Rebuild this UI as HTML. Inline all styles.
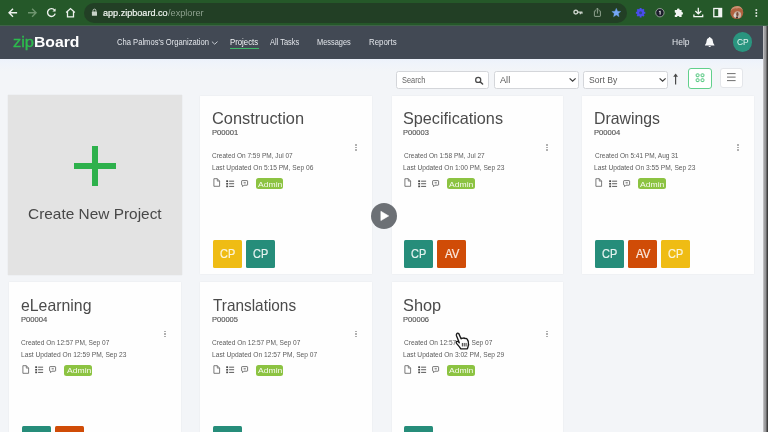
<!DOCTYPE html>
<html>
<head>
<meta charset="utf-8">
<title>zipBoard</title>
<style>
*{box-sizing:border-box;margin:0;padding:0}
html,body{width:768px;height:432px;overflow:hidden;background:#f3f5f8;font-family:"Liberation Sans",sans-serif;}
#root{position:relative;width:768px;height:432px;overflow:hidden;background:#f3f5f8}
.abs{position:absolute}
.t{position:absolute;white-space:nowrap;transform-origin:0 0}
#txt{position:absolute;left:0;top:0;width:768px;height:432px;will-change:transform;opacity:0.999}
#chrome{position:absolute;left:0;top:0;width:768px;height:26px;background:#255829;border-bottom:1px solid #3e6347}
#omni{position:absolute;left:83.8px;top:2.5px;width:542.8px;height:20.5px;border-radius:10.25px;background:#223f25}
#nav{position:absolute;left:0;top:26px;width:764px;height:33px;background:#424954}
.card{position:absolute;background:#fefefe;width:172.4px;height:178.8px;box-shadow:0 0 1.5px rgba(0,0,0,0.07)}
.dots{position:absolute;width:2px;height:8px}
.dots i{display:block;width:2.1px;height:1.7px;border-radius:0.8px;background:#a2a2a2;margin-bottom:0.8px}
.badge{position:absolute;width:27.8px;height:11.1px;border-radius:2.5px;background:#8cc342}
.av{position:absolute;width:29.1px;height:28.7px;border-radius:1.5px}
.teal{background:#268d7a}.yel{background:#efbc14}.org{background:#d04c07}
.box{position:absolute;background:#fff;border:1px solid #d4d6da;border-radius:2.5px}
</style>
</head>
<body>
<div id="root">

<div id="chrome"><div id="omni"></div></div>
<div id="nav"></div>
<div class="abs" style="left:0;top:59px;width:764px;height:12px;background:linear-gradient(#edf2fb,#f0f4fa 45%,#f3f5f8)"></div>
<!-- right scrollbar strip -->
<div class="abs" style="left:763.4px;top:26px;width:4.6px;height:406px;background:linear-gradient(to right,#d4d4d6 0,#a6a6a8 20%,#8e8e90 66%,#444 74%,#3a3a3a 100%)"></div>
<!-- create card -->
<div class="abs" style="left:8.3px;top:95.2px;width:173.3px;height:179.8px;background:#e3e3e3;box-shadow:0 0 1px rgba(0,0,0,0.12)"></div>
<div class="abs" style="left:74px;top:162.8px;width:42px;height:6.5px;background:#2eb14c"></div>
<div class="abs" style="left:91.8px;top:145.8px;width:6.5px;height:40.5px;background:#2eb14c"></div>
<!-- toolbar boxes -->
<div class="box" style="left:395.5px;top:71px;width:93.1px;height:17.6px"></div>
<div class="box" style="left:494.3px;top:71px;width:84.3px;height:17.6px"></div>
<div class="box" style="left:583.4px;top:71px;width:84.2px;height:17.6px"></div>
<div class="box" style="left:688.3px;top:68.4px;width:23.7px;height:20.8px;border-color:#62d08c;border-radius:3px"></div>
<div class="box" style="left:720.1px;top:68.4px;width:22.6px;height:19.6px;border-color:#e4e6ea;border-radius:3px"></div>
<!-- browser left icons -->
<svg class="abs" style="left:0;top:0" width="110" height="25" viewBox="0 0 110 25">
 <g fill="none" stroke="#eef2ee" stroke-width="1.35" stroke-linecap="butt" stroke-linejoin="miter">
  <path d="M17.1 12.7 H9.2 M13 8.7 L9 12.7 L13 16.7"/>
  <path d="M28 12.7 H35.9 M32.1 8.7 L36.1 12.7 L32.1 16.7" stroke="#6f956f"/>
  <path d="M54.6 10.2 A3.9 3.9 0 1 0 55.2 13.6" stroke-width="1.4"/>
  <path d="M66.2 12.6 L70.5 8.6 L74.8 12.6 M67.5 11.8 V16.8 H73.5 V11.8" stroke-width="1.3"/>
 </g>
 <path d="M55.6 8.4 V11.6 H52.4 Z" fill="#eef2ee"/>
 <rect x="91.9" y="11.6" width="5.1" height="4.2" rx="0.6" fill="#c9d3c9"/>
 <path d="M93 11.8 V10.6 A1.45 1.45 0 0 1 95.9 10.6 V11.8" fill="none" stroke="#c9d3c9" stroke-width="0.9"/>
</svg>
<!-- browser right icons -->
<svg class="abs" style="left:560px;top:0" width="208" height="26" viewBox="0 0 208 26">
 <!-- key -->
 <g fill="none" stroke="#cbd3cb" stroke-width="1.35">
  <circle cx="15.8" cy="12.1" r="1.85"/>
  <path d="M17.6 12.1 H22.4 M20.3 12.1 V14.2 M21.9 12.1 V13.8"/>
 </g>
 <!-- share -->
 <g fill="none" stroke="#93a693" stroke-width="0.95" stroke-linejoin="round">
  <path d="M36.1 10.8 H34.9 Q34.4 10.8 34.4 11.3 V15.9 Q34.4 16.4 34.9 16.4 H39.9 Q40.4 16.4 40.4 15.9 V11.3 Q40.4 10.8 39.9 10.8 H38.7"/>
  <path d="M37.4 13.6 V8.3 M36 9.6 L37.4 8.2 L38.8 9.6"/>
 </g>
 <!-- star -->
 <path d="M56.3 8.2 L57.6 11.2 L60.8 11.5 L58.4 13.6 L59.1 16.8 L56.3 15.1 L53.5 16.8 L54.2 13.6 L51.8 11.5 L55 11.2 Z" fill="#74a7f7" stroke="#74a7f7" stroke-width="0.3" stroke-linejoin="round"/>
 <!-- blue gear -->
 <circle cx="80.6" cy="12.7" r="3.6" fill="#4a4cec"/>
 <g stroke="#4a4cec" stroke-width="1.9" stroke-linecap="butt">
  <path d="M80.6 8 V17.4 M75.9 12.7 H85.3 M77.3 9.4 L83.9 16 M83.9 9.4 L77.3 16"/>
 </g>
 <circle cx="80.6" cy="12.7" r="1.5" fill="#2c4a86"/>
 <!-- circle 1 -->
 <circle cx="99.9" cy="12.7" r="4.2" fill="#1b1d2a" stroke="#aeb6ae" stroke-width="0.8"/>
 <rect x="99.6" y="10.8" width="1" height="3.8" fill="#e9ece9"/><rect x="98.9" y="11.1" width="1" height="0.8" fill="#e9ece9"/>
 <!-- puzzle -->
 <path d="M114.8 10 H116.9 A1.4 1.4 0 1 1 119.7 10 H121.6 V12 A1.4 1.4 0 1 1 121.6 14.8 V17.1 H119.4 A1.2 1.2 0 1 0 117 17.1 H114.8 V14.9 A1.2 1.2 0 1 0 114.8 12.5 Z" fill="#f3f6f3"/>
 <!-- download -->
 <g fill="none" stroke="#f3f6f3" stroke-width="1.3">
  <path d="M138.3 7.8 V13.6 M135.4 11 L138.3 13.9 L141.2 11"/>
  <path d="M133.9 14.4 V16.6 H142.7 V14.4" stroke-width="1.3"/>
 </g>
 <!-- panel -->
 <rect x="153.8" y="8.5" width="7.8" height="8.2" fill="none" stroke="#f3f6f3" stroke-width="1.3"/>
 <rect x="158.2" y="8.5" width="3.4" height="8.2" fill="#f3f6f3"/>
 <!-- profile -->
 <circle cx="176.8" cy="12.6" r="6.5" fill="#b0623f"/>
 <path d="M170.6 11 A6.5 6.5 0 0 1 183 10.4 Q180 7 176.8 8.6 Q173.5 7.4 170.6 11 Z" fill="#c89274"/>
 <ellipse cx="177.6" cy="14.8" rx="3.6" ry="3.5" fill="#c9b3a6"/>
 <ellipse cx="175" cy="15.4" rx="1.5" ry="2" fill="#d8cdc8"/>
 <ellipse cx="177.4" cy="14.2" rx="1.1" ry="2.2" fill="#7a4a38"/>
 <ellipse cx="177" cy="17.6" rx="1" ry="1" fill="#3c2c2c"/>
 <!-- dots -->
 <g fill="#dfe5df"><circle cx="196.3" cy="9.9" r="1"/><circle cx="196.3" cy="13" r="1"/><circle cx="196.3" cy="16.1" r="1"/></g>
</svg>
<!-- nav: chevron, underline, bell, avatar -->
<svg class="abs" style="left:210px;top:38px" width="10" height="9" viewBox="0 0 10 9"><path d="M1.9 3.6 L4.7 6.2 L7.5 3.6" fill="none" stroke="#d3d7dd" stroke-width="0.9"/></svg>
<div class="abs" style="left:229.6px;top:47.6px;width:29.4px;height:1.4px;background:#3db868"></div>
<svg class="abs" style="left:703px;top:35px" width="14" height="14" viewBox="0 0 14 14"><path d="M6.7 1.9 Q7.5 1.9 7.5 2.7 Q9.9 3.4 9.9 6.2 Q9.9 8.8 11.4 9.9 V10.4 H2 V9.9 Q3.5 8.8 3.5 6.2 Q3.5 3.4 5.9 2.7 Q5.9 1.9 6.7 1.9 Z M5.5 10.9 H7.9 Q7.9 11.9 6.7 11.9 Q5.5 11.9 5.5 10.9 Z" fill="#f7f8f9"/></svg>
<div class="abs" style="left:732.5px;top:32.4px;width:19.6px;height:19.6px;border-radius:10px;background:#2a957f"></div>
<!-- toolbar icons -->
<svg class="abs" style="left:473px;top:75px" width="12" height="11" viewBox="0 0 12 11"><circle cx="5.2" cy="4.9" r="2.55" fill="none" stroke="#4a4a4a" stroke-width="1.25"/><path d="M7.2 6.9 L9.6 9.0" stroke="#4a4a4a" stroke-width="1.5" stroke-linecap="round"/></svg>
<svg class="abs" style="left:568px;top:76px" width="10" height="8" viewBox="0 0 10 8"><path d="M1.6 2.4 L4.6 5.2 L7.6 2.4" fill="none" stroke="#3c3c3c" stroke-width="1.25"/></svg>
<svg class="abs" style="left:657.6px;top:76px" width="10" height="8" viewBox="0 0 10 8"><path d="M1.6 2.4 L4.6 5.2 L7.6 2.4" fill="none" stroke="#3c3c3c" stroke-width="1.25"/></svg>
<svg class="abs" style="left:671px;top:72px" width="10" height="14" viewBox="0 0 10 14"><path d="M4.6 12.6 V2.6" stroke="#4a4a4a" stroke-width="1.2"/><path d="M2.2 4.8 L4.6 1.6 L7 4.8 Z" fill="#4a4a4a"/></svg>
<svg class="abs" style="left:694px;top:72px" width="12" height="12" viewBox="0 0 12 12"><g fill="none" stroke="#4cc57a" stroke-width="1.0"><rect x="2.2" y="1.9" width="2.8" height="2.8" rx="0.7"/><rect x="7.1" y="1.9" width="2.8" height="2.8" rx="0.7"/><rect x="2.2" y="6.8" width="2.8" height="2.8" rx="0.7"/><rect x="7.1" y="6.8" width="2.8" height="2.8" rx="0.7"/></g></svg>
<svg class="abs" style="left:726px;top:72px" width="11" height="11" viewBox="0 0 11 11"><g fill="#707070"><rect x="1" y="1.1" width="8.6" height="1"/><rect x="1" y="4.6" width="8.6" height="1"/><rect x="1" y="8.1" width="8.6" height="1"/></g></svg>

<div class="card" style="left:200.2px;top:95.7px;width:172.2px"></div>
<div class="badge" style="left:255.6px;top:178.2px"></div>
<div class="dots" style="left:354.9px;top:144.2px"><i></i><i></i><i></i></div>
<svg class="abs" style="left:212.7px;top:178.0px" width="8" height="9" viewBox="0 0 8 9"><path d="M0.9 0.7 H4.3 L6.6 3.1 V8.3 H0.9 Z" fill="#fff" stroke="#5a5a5a" stroke-width="0.8" stroke-linejoin="round"/><path d="M4.3 0.7 V3.1 H6.6" fill="none" stroke="#5a5a5a" stroke-width="0.7"/></svg>
<svg class="abs" style="left:226.39999999999998px;top:179.7px" width="9" height="8" viewBox="0 0 9 8"><g fill="#4a4a4a"><rect x="0.2" y="0.3" width="1.9" height="1.7"/><rect x="0.2" y="2.9" width="1.9" height="1.7"/><rect x="0.2" y="5.5" width="1.9" height="1.7"/><rect x="3.1" y="0.7" width="5" height="0.9"/><rect x="3.1" y="3.3" width="5" height="0.9"/><rect x="3.1" y="5.9" width="5" height="0.9"/></g></svg>
<svg class="abs" style="left:240.6px;top:179.5px" width="8" height="8" viewBox="0 0 8 8"><path d="M1.2 0.6 H6.0 Q6.6 0.6 6.6 1.2 V4.6 Q6.6 5.2 6.0 5.2 H3 L1.6 6.6 V5.2 H1.2 Q0.6 5.2 0.6 4.6 V1.2 Q0.6 0.6 1.2 0.6 Z" fill="#fff" stroke="#555" stroke-width="0.8" stroke-linejoin="round"/><rect x="2.6" y="2.4" width="2.2" height="0.9" fill="#555"/></svg>
<div class="av yel" style="left:212.79999999999998px;top:239.7px"></div>
<div class="av teal" style="left:246.0px;top:239.7px"></div>
<div class="card" style="left:391.8px;top:95.7px;width:171.6px"></div>
<div class="badge" style="left:446.79999999999995px;top:178.2px"></div>
<div class="dots" style="left:546.0999999999999px;top:144.2px"><i></i><i></i><i></i></div>
<svg class="abs" style="left:403.9px;top:178.0px" width="8" height="9" viewBox="0 0 8 9"><path d="M0.9 0.7 H4.3 L6.6 3.1 V8.3 H0.9 Z" fill="#fff" stroke="#5a5a5a" stroke-width="0.8" stroke-linejoin="round"/><path d="M4.3 0.7 V3.1 H6.6" fill="none" stroke="#5a5a5a" stroke-width="0.7"/></svg>
<svg class="abs" style="left:417.59999999999997px;top:179.7px" width="9" height="8" viewBox="0 0 9 8"><g fill="#4a4a4a"><rect x="0.2" y="0.3" width="1.9" height="1.7"/><rect x="0.2" y="2.9" width="1.9" height="1.7"/><rect x="0.2" y="5.5" width="1.9" height="1.7"/><rect x="3.1" y="0.7" width="5" height="0.9"/><rect x="3.1" y="3.3" width="5" height="0.9"/><rect x="3.1" y="5.9" width="5" height="0.9"/></g></svg>
<svg class="abs" style="left:431.79999999999995px;top:179.5px" width="8" height="8" viewBox="0 0 8 8"><path d="M1.2 0.6 H6.0 Q6.6 0.6 6.6 1.2 V4.6 Q6.6 5.2 6.0 5.2 H3 L1.6 6.6 V5.2 H1.2 Q0.6 5.2 0.6 4.6 V1.2 Q0.6 0.6 1.2 0.6 Z" fill="#fff" stroke="#555" stroke-width="0.8" stroke-linejoin="round"/><rect x="2.6" y="2.4" width="2.2" height="0.9" fill="#555"/></svg>
<div class="av teal" style="left:404.0px;top:239.7px"></div>
<div class="av org" style="left:437.2px;top:239.7px"></div>
<div class="card" style="left:581.8px;top:95.7px;width:172.6px"></div>
<div class="badge" style="left:637.8px;top:178.2px"></div>
<div class="dots" style="left:737.0999999999999px;top:144.2px"><i></i><i></i><i></i></div>
<svg class="abs" style="left:594.9px;top:178.0px" width="8" height="9" viewBox="0 0 8 9"><path d="M0.9 0.7 H4.3 L6.6 3.1 V8.3 H0.9 Z" fill="#fff" stroke="#5a5a5a" stroke-width="0.8" stroke-linejoin="round"/><path d="M4.3 0.7 V3.1 H6.6" fill="none" stroke="#5a5a5a" stroke-width="0.7"/></svg>
<svg class="abs" style="left:608.6px;top:179.7px" width="9" height="8" viewBox="0 0 9 8"><g fill="#4a4a4a"><rect x="0.2" y="0.3" width="1.9" height="1.7"/><rect x="0.2" y="2.9" width="1.9" height="1.7"/><rect x="0.2" y="5.5" width="1.9" height="1.7"/><rect x="3.1" y="0.7" width="5" height="0.9"/><rect x="3.1" y="3.3" width="5" height="0.9"/><rect x="3.1" y="5.9" width="5" height="0.9"/></g></svg>
<svg class="abs" style="left:622.8px;top:179.5px" width="8" height="8" viewBox="0 0 8 8"><path d="M1.2 0.6 H6.0 Q6.6 0.6 6.6 1.2 V4.6 Q6.6 5.2 6.0 5.2 H3 L1.6 6.6 V5.2 H1.2 Q0.6 5.2 0.6 4.6 V1.2 Q0.6 0.6 1.2 0.6 Z" fill="#fff" stroke="#555" stroke-width="0.8" stroke-linejoin="round"/><rect x="2.6" y="2.4" width="2.2" height="0.9" fill="#555"/></svg>
<div class="av teal" style="left:595.0px;top:239.7px"></div>
<div class="av org" style="left:628.2px;top:239.7px"></div>
<div class="av yel" style="left:661.4px;top:239.7px"></div>
<div class="card" style="left:9.0px;top:282.2px;width:172.3px"></div>
<div class="badge" style="left:64.4px;top:364.7px"></div>
<div class="dots" style="left:163.7px;top:330.7px"><i></i><i></i><i></i></div>
<svg class="abs" style="left:21.5px;top:364.5px" width="8" height="9" viewBox="0 0 8 9"><path d="M0.9 0.7 H4.3 L6.6 3.1 V8.3 H0.9 Z" fill="#fff" stroke="#5a5a5a" stroke-width="0.8" stroke-linejoin="round"/><path d="M4.3 0.7 V3.1 H6.6" fill="none" stroke="#5a5a5a" stroke-width="0.7"/></svg>
<svg class="abs" style="left:35.2px;top:366.2px" width="9" height="8" viewBox="0 0 9 8"><g fill="#4a4a4a"><rect x="0.2" y="0.3" width="1.9" height="1.7"/><rect x="0.2" y="2.9" width="1.9" height="1.7"/><rect x="0.2" y="5.5" width="1.9" height="1.7"/><rect x="3.1" y="0.7" width="5" height="0.9"/><rect x="3.1" y="3.3" width="5" height="0.9"/><rect x="3.1" y="5.9" width="5" height="0.9"/></g></svg>
<svg class="abs" style="left:49.4px;top:366.0px" width="8" height="8" viewBox="0 0 8 8"><path d="M1.2 0.6 H6.0 Q6.6 0.6 6.6 1.2 V4.6 Q6.6 5.2 6.0 5.2 H3 L1.6 6.6 V5.2 H1.2 Q0.6 5.2 0.6 4.6 V1.2 Q0.6 0.6 1.2 0.6 Z" fill="#fff" stroke="#555" stroke-width="0.8" stroke-linejoin="round"/><rect x="2.6" y="2.4" width="2.2" height="0.9" fill="#555"/></svg>
<div class="av teal" style="left:21.6px;top:426.2px"></div>
<div class="av org" style="left:54.800000000000004px;top:426.2px"></div>
<div class="card" style="left:200.2px;top:282.2px;width:172.2px"></div>
<div class="badge" style="left:255.6px;top:364.7px"></div>
<div class="dots" style="left:354.9px;top:330.7px"><i></i><i></i><i></i></div>
<svg class="abs" style="left:212.7px;top:364.5px" width="8" height="9" viewBox="0 0 8 9"><path d="M0.9 0.7 H4.3 L6.6 3.1 V8.3 H0.9 Z" fill="#fff" stroke="#5a5a5a" stroke-width="0.8" stroke-linejoin="round"/><path d="M4.3 0.7 V3.1 H6.6" fill="none" stroke="#5a5a5a" stroke-width="0.7"/></svg>
<svg class="abs" style="left:226.39999999999998px;top:366.2px" width="9" height="8" viewBox="0 0 9 8"><g fill="#4a4a4a"><rect x="0.2" y="0.3" width="1.9" height="1.7"/><rect x="0.2" y="2.9" width="1.9" height="1.7"/><rect x="0.2" y="5.5" width="1.9" height="1.7"/><rect x="3.1" y="0.7" width="5" height="0.9"/><rect x="3.1" y="3.3" width="5" height="0.9"/><rect x="3.1" y="5.9" width="5" height="0.9"/></g></svg>
<svg class="abs" style="left:240.6px;top:366.0px" width="8" height="8" viewBox="0 0 8 8"><path d="M1.2 0.6 H6.0 Q6.6 0.6 6.6 1.2 V4.6 Q6.6 5.2 6.0 5.2 H3 L1.6 6.6 V5.2 H1.2 Q0.6 5.2 0.6 4.6 V1.2 Q0.6 0.6 1.2 0.6 Z" fill="#fff" stroke="#555" stroke-width="0.8" stroke-linejoin="round"/><rect x="2.6" y="2.4" width="2.2" height="0.9" fill="#555"/></svg>
<div class="av teal" style="left:212.79999999999998px;top:426.2px"></div>
<div class="card" style="left:391.8px;top:282.2px;width:171.6px"></div>
<div class="badge" style="left:446.79999999999995px;top:364.7px"></div>
<div class="dots" style="left:546.0999999999999px;top:330.7px"><i></i><i></i><i></i></div>
<svg class="abs" style="left:403.9px;top:364.5px" width="8" height="9" viewBox="0 0 8 9"><path d="M0.9 0.7 H4.3 L6.6 3.1 V8.3 H0.9 Z" fill="#fff" stroke="#5a5a5a" stroke-width="0.8" stroke-linejoin="round"/><path d="M4.3 0.7 V3.1 H6.6" fill="none" stroke="#5a5a5a" stroke-width="0.7"/></svg>
<svg class="abs" style="left:417.59999999999997px;top:366.2px" width="9" height="8" viewBox="0 0 9 8"><g fill="#4a4a4a"><rect x="0.2" y="0.3" width="1.9" height="1.7"/><rect x="0.2" y="2.9" width="1.9" height="1.7"/><rect x="0.2" y="5.5" width="1.9" height="1.7"/><rect x="3.1" y="0.7" width="5" height="0.9"/><rect x="3.1" y="3.3" width="5" height="0.9"/><rect x="3.1" y="5.9" width="5" height="0.9"/></g></svg>
<svg class="abs" style="left:431.79999999999995px;top:366.0px" width="8" height="8" viewBox="0 0 8 8"><path d="M1.2 0.6 H6.0 Q6.6 0.6 6.6 1.2 V4.6 Q6.6 5.2 6.0 5.2 H3 L1.6 6.6 V5.2 H1.2 Q0.6 5.2 0.6 4.6 V1.2 Q0.6 0.6 1.2 0.6 Z" fill="#fff" stroke="#555" stroke-width="0.8" stroke-linejoin="round"/><rect x="2.6" y="2.4" width="2.2" height="0.9" fill="#555"/></svg>
<div class="av teal" style="left:404.0px;top:426.2px"></div>
<div id="txt">
<div class="t" style="left:103.23px;top:7.96px;font-size:9.5px;line-height:9.5px;color:#f1f5f1;transform:scaleX(0.9552);-webkit-text-stroke:0.2px #f1f5f1;">app.zipboard.co</div>
<div class="t" style="left:168.23px;top:7.96px;font-size:9.5px;line-height:9.5px;color:#8fa290;transform:scaleX(0.9649);">/explorer</div>
<div class="t" style="left:12.75px;top:33.90px;font-size:15px;line-height:15px;color:#2ebd4e;transform:scaleX(1.0952);-webkit-text-stroke:0.35px #2ebd4e;">zip</div>
<div class="t" style="left:33.75px;top:33.90px;font-size:15px;line-height:15px;color:#ffffff;font-weight:bold;transform:scaleX(1.0489);">Board</div>
<div class="t" style="left:116.99px;top:37.98px;font-size:9px;line-height:9px;color:#e4e7ec;transform:scaleX(0.8453);">Cha Palmos's Organization</div>
<div class="t" style="left:230.24px;top:37.98px;font-size:9px;line-height:9px;color:#f4f6f8;transform:scaleX(0.8628);">Projects</div>
<div class="t" style="left:270.07px;top:37.98px;font-size:9px;line-height:9px;color:#e4e7ec;transform:scaleX(0.8264);">All Tasks</div>
<div class="t" style="left:317.08px;top:37.98px;font-size:9px;line-height:9px;color:#e4e7ec;transform:scaleX(0.8215);">Messages</div>
<div class="t" style="left:368.95px;top:37.98px;font-size:9px;line-height:9px;color:#e4e7ec;transform:scaleX(0.8758);">Reports</div>
<div class="t" style="left:671.61px;top:37.78px;font-size:9px;line-height:9px;color:#e4e7ec;transform:scaleX(0.9464);">Help</div>
<div class="t" style="left:736.91px;top:37.57px;font-size:8.9px;line-height:8.9px;color:#e8f6f2;transform:scaleX(0.9449);">CP</div>
<div class="t" style="left:402.04px;top:76.00px;font-size:8.5px;line-height:8.5px;color:#626262;transform:scaleX(0.8696);">Search</div>
<div class="t" style="left:500.22px;top:76.00px;font-size:8.5px;line-height:8.5px;color:#5a5a5a;transform:scaleX(1.0787);">All</div>
<div class="t" style="left:589.26px;top:76.00px;font-size:8.5px;line-height:8.5px;color:#5a5a5a;transform:scaleX(1.0125);">Sort By</div>
<div class="t" style="left:27.50px;top:207.34px;font-size:14.6px;line-height:14.6px;color:#484848;transform:scaleX(1.0561);">Create New Project</div>
<div class="t" style="left:211.50px;top:110.13px;font-size:16.5px;line-height:16.5px;color:#4b4b4b;transform:scaleX(0.9936);">Construction</div>
<div class="t" style="left:211.95px;top:130.01px;font-size:6.6px;line-height:6.6px;color:#555;transform:scaleX(1.1579);-webkit-text-stroke:0.13px #555;">P00001</div>
<div class="t" style="left:211.74px;top:152.14px;font-size:7.4px;line-height:7.4px;color:#5a5a5a;transform:scaleX(0.8802);">Created On 7:59 PM, Jul 07</div>
<div class="t" style="left:211.90px;top:164.14px;font-size:7.4px;line-height:7.4px;color:#5a5a5a;transform:scaleX(0.8967);">Last Updated On 5:15 PM, Sep 06</div>
<div class="t" style="left:257.86px;top:180.53px;font-size:8px;line-height:8px;color:#f7fbee;transform:scaleX(1.0716);">Admin</div>
<div class="t" style="left:220.25px;top:247.67px;font-size:12.2px;line-height:12.2px;color:#fbf4dc;transform:scaleX(0.8958);-webkit-text-stroke:0.2px #fbf4dc;">CP</div>
<div class="t" style="left:253.25px;top:247.67px;font-size:12.2px;line-height:12.2px;color:#e6f3f0;transform:scaleX(0.8958);-webkit-text-stroke:0.2px #e6f3f0;">CP</div>
<div class="t" style="left:402.50px;top:110.13px;font-size:16.5px;line-height:16.5px;color:#4b4b4b;transform:scaleX(0.9821);">Specifications</div>
<div class="t" style="left:402.98px;top:130.01px;font-size:6.6px;line-height:6.6px;color:#555;transform:scaleX(1.1389);-webkit-text-stroke:0.13px #555;">P00003</div>
<div class="t" style="left:403.74px;top:152.14px;font-size:7.4px;line-height:7.4px;color:#5a5a5a;transform:scaleX(0.8802);">Created On 1:58 PM, Jul 27</div>
<div class="t" style="left:402.89px;top:164.14px;font-size:7.4px;line-height:7.4px;color:#5a5a5a;transform:scaleX(0.8982);">Last Updated On 1:00 PM, Sep 23</div>
<div class="t" style="left:448.86px;top:180.53px;font-size:8px;line-height:8px;color:#f7fbee;transform:scaleX(1.0716);">Admin</div>
<div class="t" style="left:411.25px;top:247.67px;font-size:12.2px;line-height:12.2px;color:#e6f3f0;transform:scaleX(0.8958);-webkit-text-stroke:0.2px #e6f3f0;">CP</div>
<div class="t" style="left:444.50px;top:247.67px;font-size:12.2px;line-height:12.2px;color:#fbe9df;transform:scaleX(0.9365);-webkit-text-stroke:0.2px #fbe9df;">AV</div>
<div class="t" style="left:593.68px;top:110.13px;font-size:16.5px;line-height:16.5px;color:#4b4b4b;transform:scaleX(0.9588);">Drawings</div>
<div class="t" style="left:593.97px;top:130.01px;font-size:6.6px;line-height:6.6px;color:#555;transform:scaleX(1.1556);-webkit-text-stroke:0.13px #555;">P00004</div>
<div class="t" style="left:594.74px;top:152.14px;font-size:7.4px;line-height:7.4px;color:#5a5a5a;transform:scaleX(0.8789);">Created On 5:41 PM, Aug 31</div>
<div class="t" style="left:593.89px;top:164.14px;font-size:7.4px;line-height:7.4px;color:#5a5a5a;transform:scaleX(0.8982);">Last Updated On 3:55 PM, Sep 23</div>
<div class="t" style="left:639.86px;top:180.53px;font-size:8px;line-height:8px;color:#f7fbee;transform:scaleX(1.0716);">Admin</div>
<div class="t" style="left:602.25px;top:247.67px;font-size:12.2px;line-height:12.2px;color:#e6f3f0;transform:scaleX(0.8958);-webkit-text-stroke:0.2px #e6f3f0;">CP</div>
<div class="t" style="left:635.50px;top:247.67px;font-size:12.2px;line-height:12.2px;color:#fbe9df;transform:scaleX(0.9365);-webkit-text-stroke:0.2px #fbe9df;">AV</div>
<div class="t" style="left:668.25px;top:247.67px;font-size:12.2px;line-height:12.2px;color:#fbf4dc;transform:scaleX(0.8958);-webkit-text-stroke:0.2px #fbf4dc;">CP</div>
<div class="t" style="left:20.56px;top:296.63px;font-size:16.5px;line-height:16.5px;color:#4b4b4b;transform:scaleX(0.9600);">eLearning</div>
<div class="t" style="left:20.97px;top:316.51px;font-size:6.6px;line-height:6.6px;color:#555;transform:scaleX(1.1556);-webkit-text-stroke:0.13px #555;">P00004</div>
<div class="t" style="left:20.81px;top:338.64px;font-size:7.4px;line-height:7.4px;color:#5a5a5a;transform:scaleX(0.8892);">Created On 12:57 PM, Sep 07</div>
<div class="t" style="left:20.88px;top:350.64px;font-size:7.4px;line-height:7.4px;color:#5a5a5a;transform:scaleX(0.9009);">Last Updated On 12:59 PM, Sep 23</div>
<div class="t" style="left:66.86px;top:367.03px;font-size:8px;line-height:8px;color:#f7fbee;transform:scaleX(1.0716);">Admin</div>
<div class="t" style="left:28.25px;top:434.17px;font-size:12.2px;line-height:12.2px;color:#e6f3f0;transform:scaleX(0.8958);-webkit-text-stroke:0.2px #e6f3f0;">CP</div>
<div class="t" style="left:62.50px;top:434.17px;font-size:12.2px;line-height:12.2px;color:#fbe9df;transform:scaleX(0.9365);-webkit-text-stroke:0.2px #fbe9df;">AV</div>
<div class="t" style="left:212.91px;top:296.63px;font-size:16.5px;line-height:16.5px;color:#4b4b4b;transform:scaleX(0.9308);">Translations</div>
<div class="t" style="left:211.97px;top:316.51px;font-size:6.6px;line-height:6.6px;color:#555;transform:scaleX(1.1441);-webkit-text-stroke:0.13px #555;">P00005</div>
<div class="t" style="left:211.81px;top:338.64px;font-size:7.4px;line-height:7.4px;color:#5a5a5a;transform:scaleX(0.8892);">Created On 12:57 PM, Sep 07</div>
<div class="t" style="left:211.88px;top:350.64px;font-size:7.4px;line-height:7.4px;color:#5a5a5a;transform:scaleX(0.8988);">Last Updated On 12:57 PM, Sep 07</div>
<div class="t" style="left:257.86px;top:367.03px;font-size:8px;line-height:8px;color:#f7fbee;transform:scaleX(1.0716);">Admin</div>
<div class="t" style="left:220.25px;top:434.17px;font-size:12.2px;line-height:12.2px;color:#e6f3f0;transform:scaleX(0.8958);-webkit-text-stroke:0.2px #e6f3f0;">CP</div>
<div class="t" style="left:402.50px;top:296.63px;font-size:16.5px;line-height:16.5px;color:#4b4b4b;transform:scaleX(0.9906);">Shop</div>
<div class="t" style="left:402.97px;top:316.51px;font-size:6.6px;line-height:6.6px;color:#555;transform:scaleX(1.1450);-webkit-text-stroke:0.13px #555;">P00006</div>
<div class="t" style="left:403.81px;top:338.64px;font-size:7.4px;line-height:7.4px;color:#5a5a5a;transform:scaleX(0.8892);">Created On 12:57 PM, Sep 07</div>
<div class="t" style="left:402.89px;top:350.64px;font-size:7.4px;line-height:7.4px;color:#5a5a5a;transform:scaleX(0.8956);">Last Updated On 3:02 PM, Sep 29</div>
<div class="t" style="left:448.86px;top:367.03px;font-size:8px;line-height:8px;color:#f7fbee;transform:scaleX(1.0716);">Admin</div>
<div class="t" style="left:411.25px;top:434.17px;font-size:12.2px;line-height:12.2px;color:#e6f3f0;transform:scaleX(0.8958);-webkit-text-stroke:0.2px #e6f3f0;">CP</div>
</div>
<!-- play button -->
<div class="abs" style="left:370.7px;top:202.5px;width:26.6px;height:26.6px;border-radius:14px;background:#6c7075"></div>
<svg class="abs" style="left:378px;top:209px" width="14" height="14" viewBox="0 0 14 14"><path d="M2.9 2.3 L10.7 6.9 L2.9 11.6 Z" fill="#fff" stroke="#fff" stroke-width="0.6" stroke-linejoin="round"/></svg>
<!-- hand cursor -->
<svg class="abs" style="left:452.9px;top:330.9px" width="19.6" height="20.7" viewBox="0 0 18 19"><path d="M3.4 2.6 Q4.2 1.4 5.3 2.4 L7.4 7.2 Q8 6 9.2 6.8 Q10 5.9 11.1 7 Q12.2 6.3 13.1 7.6 Q14.6 9.6 14.2 12.4 Q13.9 14.6 13.2 16.4 H7.2 Q5.6 14 3.4 11.6 Q2.3 10.2 3.6 9.6 Q4.8 9.4 5.8 10.8 L3.2 4.4 Q2.9 3.4 3.4 2.6 Z" fill="#fff" stroke="#1a1a1a" stroke-width="1.25" stroke-linejoin="round"/><path d="M8.6 11 V14.2 M10.3 11 V14.2 M12 11 V14.2" stroke="#1a1a1a" stroke-width="0.8"/></svg>

</div>
</body>
</html>
